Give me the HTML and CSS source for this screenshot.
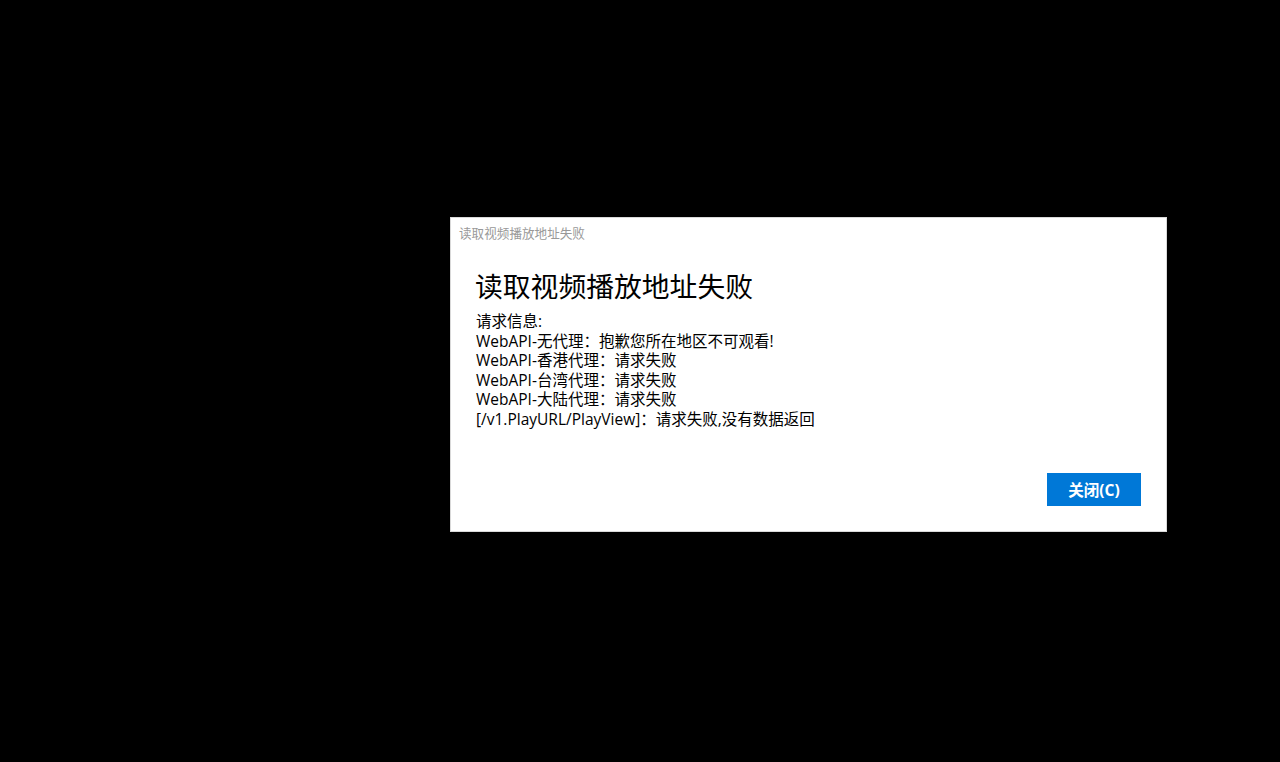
FILE: index.html
```html
<!DOCTYPE html>
<html lang="zh-CN">
<head>
<meta charset="utf-8">
<link rel="stylesheet" href="styles.css">
</head>
<body>
<div class="stage">
  <div class="dialog">
    <div class="caption">读取视频播放地址失败</div>
    <div class="content">
      <h1 class="heading">读取视频播放地址失败</h1>
      <div class="message">
        <div>请求信息:</div>
        <div>WebAPI-无代理：抱歉您所在地区不可观看!</div>
        <div>WebAPI-香港代理：请求失败</div>
        <div>WebAPI-台湾代理：请求失败</div>
        <div>WebAPI-大陆代理：请求失败</div>
        <div>[/v1.PlayURL/PlayView]：请求失败,没有数据返回</div>
      </div>
    </div>
    <div class="actions">
      <button class="btn-close">关闭(C)</button>
    </div>
  </div>
</div>
</body>
</html>
```

FILE: styles.css
```css
html, body {
  margin: 0;
  padding: 0;
  background: #000;
  width: 1280px;
  height: 762px;
  overflow: hidden;
}
body {
  font-family: "Noto Sans CJK SC", "Open Sans", sans-serif;
}
.stage {
  padding-top: 217px;
  padding-left: 450px;
}
.dialog {
  width: 715px;
  height: 313px;
  background: #fff;
  border: 1px solid #d9d9d9;
  display: flex;
  flex-direction: column;
}
.caption {
  font-family: "Liberation Sans", "Noto Sans CJK SC", sans-serif;
  font-size: 12.6px;
  color: #999;
  line-height: 16px;
  padding: 8px 0 0 8px;
  height: 20px;
}
.content {
  padding: 0 25px;
  flex: 1;
}
.heading {
  margin: 25px 0 0 -1px;
  font-family: "Liberation Sans", "Noto Sans CJK SC", sans-serif;
  font-size: 27.8px;
  font-weight: normal;
  line-height: 34px;
  color: #000;
}
.message {
  margin-top: 7px;
  font-family: "Open Sans", "Noto Sans CJK SC", sans-serif;
  font-size: 15.5px;
  line-height: 19.5px;
  color: #000;
}
.actions {
  display: flex;
  justify-content: flex-end;
  padding: 0 25px 25px 0;
}
.btn-close {
  width: 94px;
  height: 33px;
  background: #0078d7;
  border: none;
  color: #fff;
  font-family: "Open Sans", "Noto Sans CJK SC", sans-serif;
  font-weight: bold;
  font-size: 15.5px;
  padding: 0;
}
```
